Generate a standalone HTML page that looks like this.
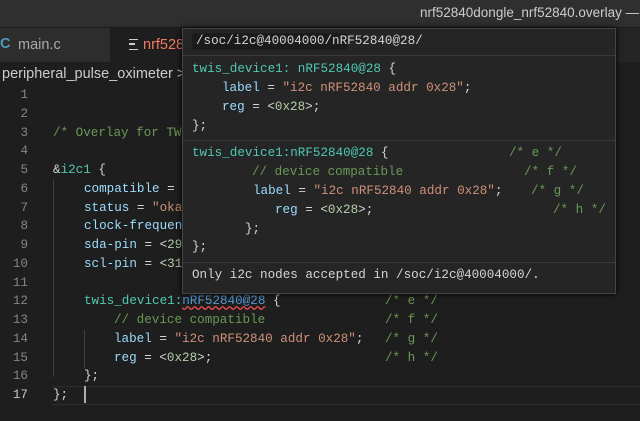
<!DOCTYPE html>
<html><head><style>
body{margin:0;width:640px;height:421px;overflow:hidden;background:#1e1e1e;position:relative;font-family:"Liberation Sans",sans-serif}
.m{font-family:"Liberation Mono",monospace;font-size:12.6px;white-space:pre;position:absolute;line-height:19px}
.t{color:#4ec9b0}.p{color:#9cdcfe}.s{color:#ce9178}.n{color:#b5cea8}.c{color:#6a9955}.w{color:#d4d4d4}
.ln{position:absolute;width:28px;text-align:right;color:#858585;font-family:"Liberation Mono",monospace;font-size:12.6px;line-height:19px}
</style></head><body>
<div style="position:absolute;left:0;top:0;width:640px;height:27px;background:#2f2f2f;border-bottom:1px solid #1a1a1a"></div>
<div style="position:absolute;left:420px;top:5px;color:#ccc;font-size:13.5px;white-space:nowrap">nrf52840dongle_nrf52840.overlay —</div>
<div style="position:absolute;left:0;top:28px;width:640px;height:34px;background:#252526"></div>
<div style="position:absolute;left:0;top:28px;width:110px;height:34px;background:#2d2d2d"></div>
<div style="position:absolute;left:110px;top:28px;width:80px;height:34px;background:#1e1e1e"></div>
<div style="position:absolute;left:0;top:36px;color:#519aba;font-size:14.5px;font-weight:bold">C</div>
<div style="position:absolute;left:18px;top:37px;color:#aaa;font-size:14.5px">main.c</div>
<div style="position:absolute;left:129px;top:39px;width:9px;height:9px;border-top:1.5px solid #ccc;border-bottom:1.5px solid #ccc"></div>
<div style="position:absolute;left:129px;top:43px;width:6px;height:1.5px;background:#ccc"></div>
<div style="position:absolute;left:143px;top:37px;color:#f07b63;font-size:14.5px">nrf528</div>
<div style="position:absolute;left:2px;top:66px;color:#ccc;font-size:14.5px;white-space:nowrap">peripheral_pulse_oximeter &gt;</div>

<div style="position:absolute;left:52px;top:386px;width:588px;height:17px;border-top:1px solid #2c2c2c;border-bottom:1px solid #2c2c2c"></div>
<div style="position:absolute;left:53px;top:179px;width:1px;height:198px;background:#404040"></div>
<div style="position:absolute;left:84px;top:330px;width:1px;height:38px;background:#404040"></div>
<div style="position:absolute;left:84px;top:386px;width:2px;height:17px;background:#aeafad"></div>

<div class="ln" style="top:86px">1</div><div class="ln" style="top:104.75px">2</div><div class="ln" style="top:123.5px">3</div><div class="ln" style="top:142.25px">4</div><div class="ln" style="top:161px">5</div><div class="ln" style="top:179.75px">6</div><div class="ln" style="top:198.5px">7</div><div class="ln" style="top:217.25px">8</div><div class="ln" style="top:236px">9</div><div class="ln" style="top:254.75px">10</div><div class="ln" style="top:273.5px">11</div><div class="ln" style="top:292.25px">12</div><div class="ln" style="top:311px">13</div><div class="ln" style="top:329.75px">14</div><div class="ln" style="top:348.5px">15</div><div class="ln" style="top:367.25px">16</div><div class="ln" style="top:386px;color:#c6c6c6">17</div>

<div class="m c" style="left:53px;top:123.5px">/* Overlay for TW</div>
<div class="m w" style="left:53px;top:161px">&amp;<span class="t">i2c1</span> {</div>
<div class="m" style="left:84px;top:179.75px"><span class="p">compatible</span><span class="w"> = </span></div>
<div class="m" style="left:84px;top:198.5px"><span class="p">status</span><span class="w"> = </span><span class="s">"oka</span></div>
<div class="m p" style="left:84px;top:217.25px">clock-frequen</div>
<div class="m" style="left:84px;top:236px"><span class="p">sda-pin</span><span class="w"> = &lt;</span><span class="n">29</span></div>
<div class="m" style="left:84px;top:254.75px"><span class="p">scl-pin</span><span class="w"> = &lt;</span><span class="n">31</span></div>
<div class="m" style="left:84px;top:292.25px"><span class="t">twis_device1:</span><span style="color:#569cd6;text-decoration:underline wavy #f14c4c">nRF52840@28</span><span class="w"> {</span></div>
<div class="m c" style="left:385px;top:292.25px">/* e */</div>
<div class="m c" style="left:114px;top:311px">// device compatible</div>
<div class="m c" style="left:385px;top:311px">/* f */</div>
<div class="m" style="left:114px;top:329.75px"><span class="p">label</span><span class="w"> = </span><span class="s">"i2c nRF52840 addr 0x28"</span><span class="w">;</span></div>
<div class="m c" style="left:385px;top:329.75px">/* g */</div>
<div class="m" style="left:114px;top:348.5px"><span class="p">reg</span><span class="w"> = &lt;</span><span class="n">0x28</span><span class="w">&gt;;</span></div>
<div class="m c" style="left:385px;top:348.5px">/* h */</div>
<div class="m w" style="left:84px;top:367.25px">};</div>
<div class="m w" style="left:53px;top:386px">};</div>

<div style="position:absolute;left:182px;top:28px;width:432px;height:264px;background:#252526;border:1px solid #454545;box-shadow:0 0 6px #000"></div>
<div style="position:absolute;left:183px;top:55px;width:432px;height:1px;background:#3a3a3a"></div>
<div style="position:absolute;left:183px;top:140px;width:432px;height:1px;background:#3a3a3a"></div>
<div style="position:absolute;left:183px;top:262px;width:432px;height:1px;background:#3a3a3a"></div>
<div style="position:absolute;left:192px;top:33px;width:155px;height:17px;background:#1b1b1b;border-radius:3px"></div>
<div class="m w" style="left:196px;top:32px">/soc/i2c@40004000/nRF52840@28/</div>
<div class="m" style="left:192px;top:60px"><span class="t">twis_device1: nRF52840@28</span><span class="w"> {</span></div>
<div class="m" style="left:222px;top:79px"><span class="p">label</span><span class="w"> = </span><span class="s">"i2c nRF52840 addr 0x28"</span><span class="w">;</span></div>
<div class="m" style="left:222px;top:98px"><span class="p">reg</span><span class="w"> = &lt;</span><span class="n">0x28</span><span class="w">&gt;;</span></div>
<div class="m w" style="left:192px;top:117px">};</div>
<div class="m" style="left:192px;top:144px"><span class="t">twis_device1:nRF52840@28</span><span class="w"> {</span></div>
<div class="m c" style="left:509px;top:144px">/* e */</div>
<div class="m c" style="left:252px;top:163px">// device compatible</div>
<div class="m c" style="left:524px;top:163px">/* f */</div>
<div class="m" style="left:253px;top:182px"><span class="p">label</span><span class="w"> = </span><span class="s">"i2c nRF52840 addr 0x28"</span><span class="w">;</span></div>
<div class="m c" style="left:531px;top:182px">/* g */</div>
<div class="m" style="left:275px;top:201px"><span class="p">reg</span><span class="w"> = &lt;</span><span class="n">0x28</span><span class="w">&gt;;</span></div>
<div class="m c" style="left:553px;top:201px">/* h */</div>
<div class="m w" style="left:245px;top:220px">};</div>
<div class="m w" style="left:192px;top:238px">};</div>
<div class="m w" style="left:192px;top:266px">Only i2c nodes accepted in /soc/i2c@40004000/.</div>
</body></html>
